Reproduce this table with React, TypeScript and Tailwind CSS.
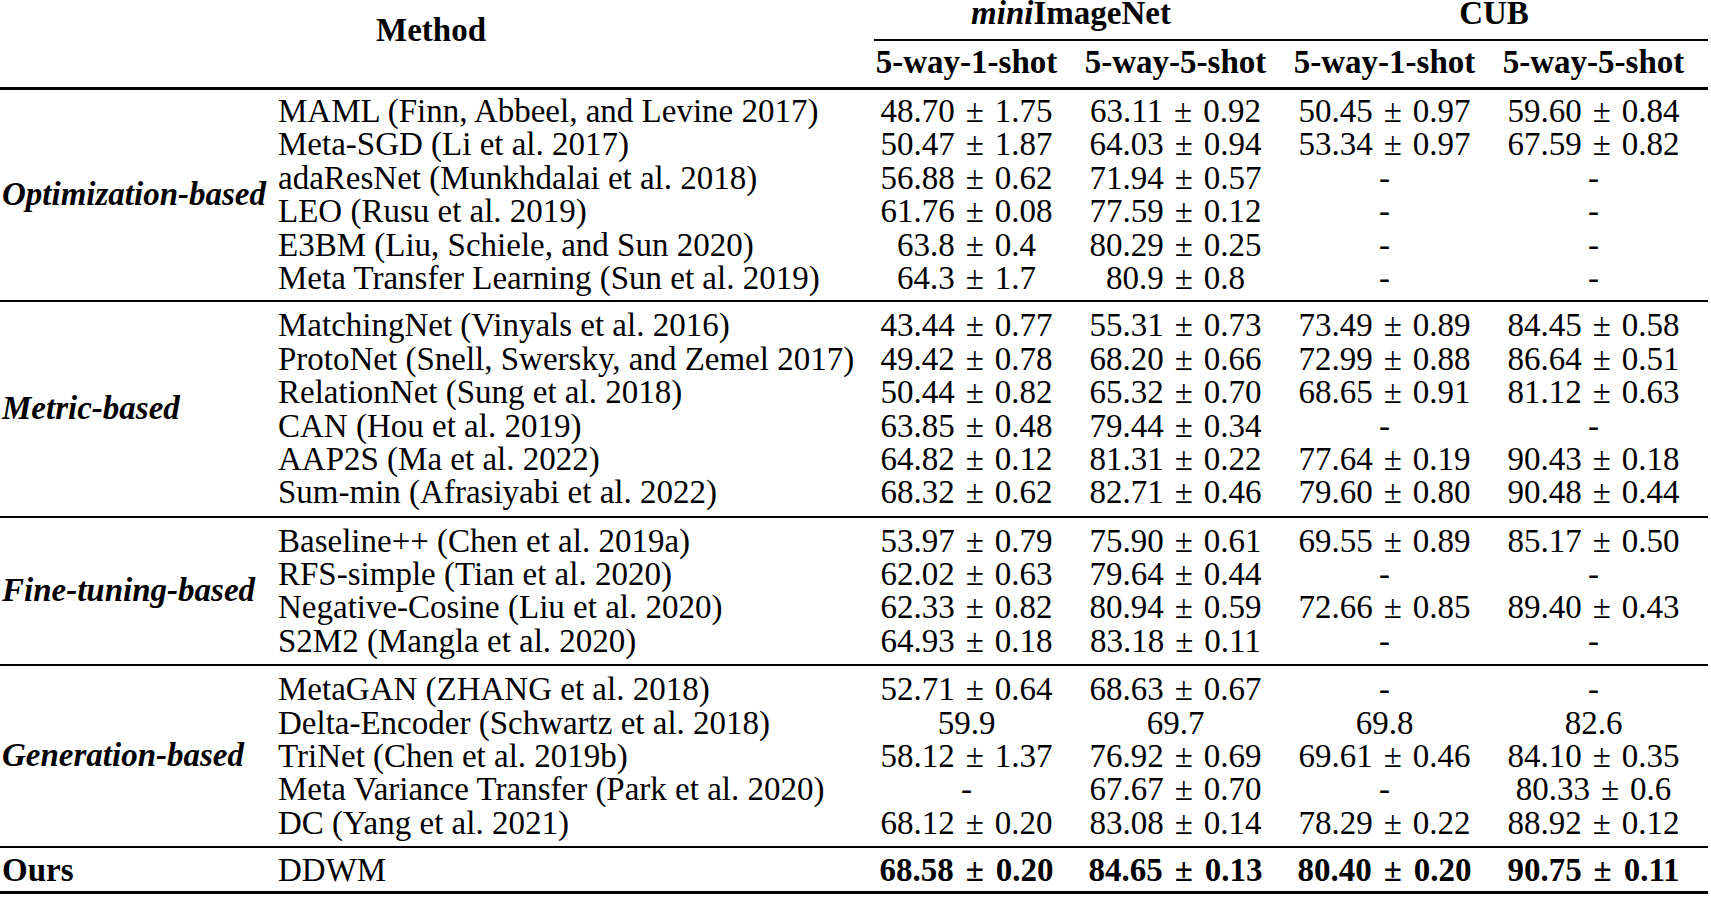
import React from "react";

type Row = [string, string, string, string, string];

const GROUPS: { name: string; pad: string; rows: Row[] }[] = [
  {
    name: "Optimization-based",
    pad: "pt-[5px] pb-[5px]",
    rows: [
      ["MAML (Finn, Abbeel, and Levine 2017)", "48.70 ± 1.75", "63.11 ± 0.92", "50.45 ± 0.97", "59.60 ± 0.84"],
      ["Meta-SGD (Li et al. 2017)", "50.47 ± 1.87", "64.03 ± 0.94", "53.34 ± 0.97", "67.59 ± 0.82"],
      ["adaResNet (Munkhdalai et al. 2018)", "56.88 ± 0.62", "71.94 ± 0.57", "-", "-"],
      ["LEO (Rusu et al. 2019)", "61.76 ± 0.08", "77.59 ± 0.12", "-", "-"],
      ["E3BM (Liu, Schiele, and Sun 2020)", "63.8 ± 0.4", "80.29 ± 0.25", "-", "-"],
      ["Meta Transfer Learning (Sun et al. 2019)", "64.3 ± 1.7", "80.9 ± 0.8", "-", "-"],
    ],
  },
  {
    name: "Metric-based",
    pad: "pt-[7px] pb-[6px]",
    rows: [
      ["MatchingNet (Vinyals et al. 2016)", "43.44 ± 0.77", "55.31 ± 0.73", "73.49 ± 0.89", "84.45 ± 0.58"],
      ["ProtoNet (Snell, Swersky, and Zemel 2017)", "49.42 ± 0.78", "68.20 ± 0.66", "72.99 ± 0.88", "86.64 ± 0.51"],
      ["RelationNet (Sung et al. 2018)", "50.44 ± 0.82", "65.32 ± 0.70", "68.65 ± 0.91", "81.12 ± 0.63"],
      ["CAN (Hou et al. 2019)", "63.85 ± 0.48", "79.44 ± 0.34", "-", "-"],
      ["AAP2S (Ma et al. 2022)", "64.82 ± 0.12", "81.31 ± 0.22", "77.64 ± 0.19", "90.43 ± 0.18"],
      ["Sum-min (Afrasiyabi et al. 2022)", "68.32 ± 0.62", "82.71 ± 0.46", "79.60 ± 0.80", "90.48 ± 0.44"],
    ],
  },
  {
    name: "Fine-tuning-based",
    pad: "pt-[7px] pb-[6px]",
    rows: [
      ["Baseline++ (Chen et al. 2019a)", "53.97 ± 0.79", "75.90 ± 0.61", "69.55 ± 0.89", "85.17 ± 0.50"],
      ["RFS-simple (Tian et al. 2020)", "62.02 ± 0.63", "79.64 ± 0.44", "-", "-"],
      ["Negative-Cosine (Liu et al. 2020)", "62.33 ± 0.82", "80.94 ± 0.59", "72.66 ± 0.85", "89.40 ± 0.43"],
      ["S2M2 (Mangla et al. 2020)", "64.93 ± 0.18", "83.18 ± 0.11", "-", "-"],
    ],
  },
  {
    name: "Generation-based",
    pad: "pt-[7px] pb-[6px]",
    rows: [
      ["MetaGAN (ZHANG et al. 2018)", "52.71 ± 0.64", "68.63 ± 0.67", "-", "-"],
      ["Delta-Encoder (Schwartz et al. 2018)", "59.9", "69.7", "69.8", "82.6"],
      ["TriNet (Chen et al. 2019b)", "58.12 ± 1.37", "76.92 ± 0.69", "69.61 ± 0.46", "84.10 ± 0.35"],
      ["Meta Variance Transfer (Park et al. 2020)", "-", "67.67 ± 0.70", "-", "80.33 ± 0.6"],
      ["DC (Yang et al. 2021)", "68.12 ± 0.20", "83.08 ± 0.14", "78.29 ± 0.22", "88.92 ± 0.12"],
    ],
  },
];

function Num({ value, bold }: { value: string; bold?: boolean }) {
  if (!value.includes("±")) return <span>{value}</span>;
  const [a, b] = value.split(" ± ");
  return (
    <span className={bold ? "font-bold" : ""}>
      {a}
      <span className={bold ? "mx-[6px] inline-block w-[30px] text-center" : "mx-[7px] inline-block w-[26px] text-center"}>±</span>
      {b}
    </span>
  );
}

function App() {
  return (
    <div className="min-h-[900px] w-full bg-white text-black font-['Liberation_Serif','Times_New_Roman',serif] text-[33px]">
      <div className="w-[1708px]">
        {/* header */}
        <div className="flex">
          <div className="w-[862px] pt-[14px] text-center font-bold leading-[33px]">Method</div>
          <div className="w-[846px]">
            <div className="flex h-[39px] font-bold leading-[26px]">
              <div className="w-[418px] text-center">
                <i>mini</i>ImageNet
              </div>
              <div className="w-[428px] text-center">CUB</div>
            </div>
            <div className="ml-[12px] h-[1.5px] bg-black" />
            <div className="flex h-[46.5px] pt-[5px] font-bold leading-[33px]">
              {["5-way-1-shot", "5-way-5-shot", "5-way-1-shot", "5-way-5-shot"].map((h, i) => (
                <div key={i} className="w-[209px] text-center">
                  {h}
                </div>
              ))}
            </div>
          </div>
        </div>
        <div className="h-[3px] bg-black" />

        {GROUPS.map((g) => (
          <div key={g.name}>
            <div className="flex">
              <div className="flex w-[278px] items-center pl-[2px] font-bold italic">{g.name}</div>
              <div className={g.pad}>
                {g.rows.map((r, i) => (
                  <div key={i} className="flex h-[33.4px] leading-[33.4px]">
                    <div className="w-[584px] whitespace-nowrap">{r[0]}</div>
                    {r.slice(1).map((v, j) => (
                      <div key={j} className="w-[209px] text-center whitespace-nowrap">
                        <Num value={v} />
                      </div>
                    ))}
                  </div>
                ))}
              </div>
            </div>
            <div className="h-[2px] bg-black" />
          </div>
        ))}

        {/* ours */}
        <div className="flex pt-[6px] pb-[3px]">
          <div className="w-[278px] pl-[2px] font-bold leading-[33.4px]">Ours</div>
          <div className="flex h-[33.4px] leading-[33.4px]">
            <div className="w-[584px]">DDWM</div>
            {["68.58 ± 0.20", "84.65 ± 0.13", "80.40 ± 0.20", "90.75 ± 0.11"].map((v, j) => (
              <div key={j} className="w-[209px] text-center whitespace-nowrap">
                <Num value={v} bold />
              </div>
            ))}
          </div>
        </div>
        <div className="h-[3px] bg-black" />
      </div>
    </div>
  );
}

export default App;
